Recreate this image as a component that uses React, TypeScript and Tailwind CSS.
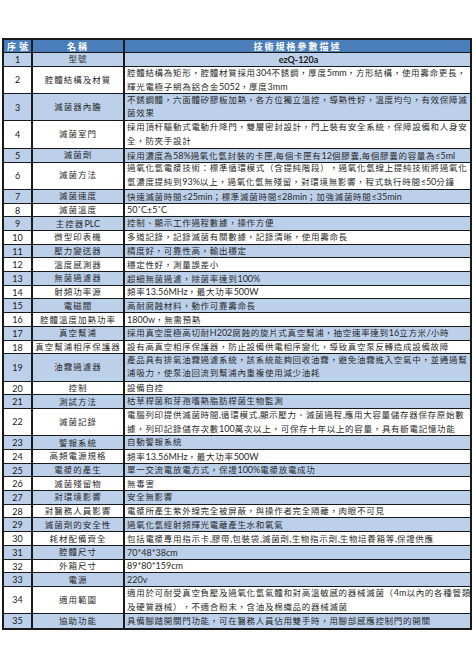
import React from 'react';

type Row = { no: number; name: string; lines: string[]; bold?: boolean };

const rows: Row[] = [
  { no: 1, name: '型號', lines: ['ezQ-120a'], bold: true },
  {
    no: 2,
    name: '腔體結構及材質',
    lines: ['腔體結構為矩形，腔體材質採用304不銹鋼，厚度5mm，方形結構，使用壽命更長，', '輝光電極子網為鋁合金5052，厚度3mm'],
  },
  {
    no: 3,
    name: '滅菌器內膽',
    lines: ['不銹鋼體，六面體矽膠板加熱，各方位獨立溫控，導熱性好，溫度均勻，有效保障滅', '菌效果'],
  },
  {
    no: 4,
    name: '滅菌室門',
    lines: ['採用頂杆驅動式電動升降門，雙層密封設計，門上裝有安全系統，保障設備和人身安', '全，防夾手設計'],
  },
  { no: 5, name: '滅菌劑', lines: ['採用濃度為58%過氧化氫封裝的卡匣,每個卡匣有12個膠囊,每個膠囊的容量為≤5ml'] },
  {
    no: 6,
    name: '滅菌方法',
    lines: ['過氧化氫電漿技術：標準循環模式（含提純階段），過氧化氫線上提純技術將過氧化', '氫濃度提純到93%以上，過氧化氫無殘留，對環境無影響，程式執行時間≤50分鐘'],
  },
  { no: 7, name: '滅菌速度', lines: ['快速滅菌時間≤25min；標準滅菌時間≤28min；加強滅菌時間≤35min'] },
  { no: 8, name: '滅菌溫度', lines: ['50˚C±5˚C'] },
  { no: 9, name: '主控器PLC', lines: ['控制、顯示工作過程數據，操作方便'] },
  { no: 10, name: '微型印表機', lines: ['多道記錄，記錄滅菌有關數據，記錄清晰，使用壽命長'] },
  { no: 11, name: '壓力變送器', lines: ['精度好，可靠性高，輸出穩定'] },
  { no: 12, name: '溫度感測器', lines: ['穩定性好，測量誤差小'] },
  { no: 13, name: '無菌過濾器', lines: ['超細無菌過濾，除菌率達到100%'] },
  { no: 14, name: '射頻功率源', lines: ['頻率13.56MHz，最大功率500W'] },
  { no: 15, name: '電磁閥', lines: ['高耐腐蝕材料，動作可靠壽命長'] },
  { no: 16, name: '腔體溫度加熱功率', lines: ['1800w，無需預熱'] },
  { no: 17, name: '真空幫浦', lines: ['採用真空度極高切耐H202腐蝕的旋片式真空幫浦，抽空速率達到16立方米/小時'] },
  { no: 18, name: '真空幫浦相序保護器', lines: ['設有高真空相序保護器，防止設備供電相序變化，導致真空泵反轉造成設備故障'] },
  {
    no: 19,
    name: '油霧過濾器',
    lines: ['產品具有排氣油霧過濾系統，該系統能夠回收油霧，避免油霧進入空氣中，並通過幫', '浦吸力，使泵油回流到幫浦內重複使用減少油耗'],
  },
  { no: 20, name: '控制', lines: ['設備自控'] },
  { no: 21, name: '測試方法', lines: ['枯草桿菌和芽孢嗜熱脂肪桿菌生物監測'] },
  {
    no: 22,
    name: '滅菌記錄',
    lines: ['電腦列印提供滅菌時間,循環模式,顯示壓力、滅菌過程,應用大容量儲存器保存原始數', '據，列印記錄儲存次數100萬次以上，可保存十年以上的容量，具有斷電記憶功能'],
  },
  { no: 23, name: '警報系統', lines: ['自動警報系統'] },
  { no: 24, name: '高頻電源規格', lines: ['頻率13.56MHz，最大功率500W'] },
  { no: 25, name: '電漿的產生', lines: ['單一交流電放電方式，保證100%電漿放電成功'] },
  { no: 26, name: '滅菌殘留物', lines: ['無毒害'] },
  { no: 27, name: '對環境影響', lines: ['安全無影響'] },
  { no: 28, name: '對醫務人員影響', lines: ['電漿所產生紫外線完全被屏蔽，與操作者完全隔離，肉眼不可見'] },
  { no: 29, name: '滅菌劑的安全性', lines: ['過氧化氫經射頻輝光電離產生水和氧氣'] },
  { no: 30, name: '耗材配備齊全', lines: ['包括電漿專用指示卡,膠帶,包裝袋,滅菌劑,生物指示劑,生物培養箱等,保證供應'] },
  { no: 31, name: '腔體尺寸', lines: ['70*48*38cm'] },
  { no: 32, name: '外箱尺寸', lines: ['89*80*159cm'] },
  { no: 33, name: '電源', lines: ['220v'] },
  {
    no: 34,
    name: '適用範圍',
    lines: ['適用於可耐受真空負壓及過氧化氫氣體和對高溫敏感的器械滅菌（4m以內的各種管類', '及硬質器械），不適合粉末，含油及棉織品的器械滅菌'],
  },
  { no: 35, name: '協助功能', lines: ['具備腳踏開關門功能，可在醫務人員佔用雙手時，用腳部感應控制門的開關'] },
];

// latin runs keep normal spacing, CJK gets spread a bit like the sheet
function Mixed({ text }: { text: string }) {
  const parts = text.split(/([\x20-\x7E±≤˚]+)/);
  return (
    <>
      {parts.map((p, i) =>
        /^[\x20-\x7E±≤˚]+$/.test(p) ? (
          <span key={i} className="tracking-normal text-[9px]">
            {p}
          </span>
        ) : (
          <span key={i}>{p}</span>
        )
      )}
    </>
  );
}

export default function App() {
  return (
    <div className="w-[474px] h-[670px] bg-white pt-[38px] font-[Lato,'Noto_Sans_CJK_TC',sans-serif] text-[#2a2a2a]">
      <div className="mx-[2px] border-2 border-[#1a1a1a]">
        {/* Header */}
        <div className="grid grid-cols-[29px_92px_1fr] h-[13px] bg-[#4a7ebb] text-white border-b border-[#1a1a1a]">
          <div className="flex items-center justify-center border-r-2 border-[#1a1a1a] text-[9px] font-bold tracking-[3px] pl-[3px]">
            序號
          </div>
          <div className="flex items-center justify-center border-r-2 border-[#1a1a1a] text-[9px] font-bold tracking-[2px]">
            名稱
          </div>
          <div className="flex items-center justify-center text-[9px] font-bold tracking-[2px]">技術規格參數描述</div>
        </div>

        {rows.map((r) => {
          const tall = r.lines.length > 1;
          const bg = r.no % 2 === 1 ? 'bg-[#bcd0ea]' : 'bg-white';
          return (
            <div
              key={r.no}
              className={`grid grid-cols-[29px_92px_1fr] border-b border-[#1a1a1a] last:border-b-0 ${bg} ${
                tall ? 'h-[27.4px]' : 'h-[13.7px]'
              }`}
            >
              <div className="flex items-center justify-center border-r-2 border-[#1a1a1a] text-[9px] text-[#1a1a1a]">
                {r.no}
              </div>
              <div className="flex items-center justify-center border-r-2 border-[#1a1a1a] text-[8.5px] tracking-[1px] whitespace-nowrap overflow-hidden">
                <Mixed text={r.name} />
              </div>
              <div
                className={`flex flex-col justify-center pl-[2px] text-[8.5px] tracking-[0.7px] overflow-hidden ${
                  r.bold ? 'items-center font-bold text-[#1a1a1a]' : ''
                }`}
              >
                {r.lines.map((l, i) => (
                  <div key={i} className="whitespace-nowrap leading-[13.2px]">
                    <Mixed text={l} />
                  </div>
                ))}
              </div>
            </div>
          );
        })}
      </div>
    </div>
  );
}
